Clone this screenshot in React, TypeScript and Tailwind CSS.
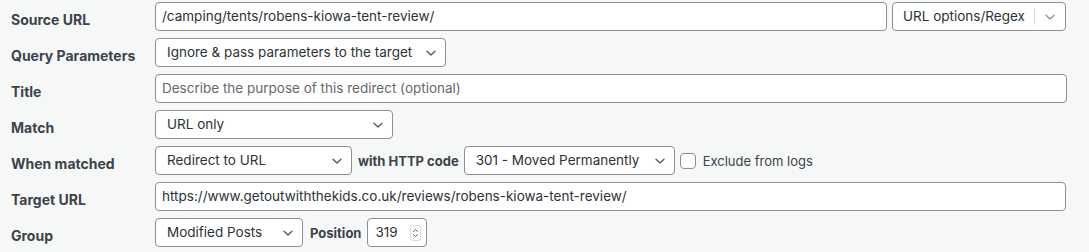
import { ReactNode } from 'react'

const font = { fontFamily: 'Inter, "Liberation Sans", sans-serif' }

const Chevron = ({ className = 'text-[#50575e]' }: { className?: string }) => (
  <svg width="12" height="12" viewBox="0 0 12 12" className={className} fill="none">
    <path d="M2 4.2 6 8l4-3.8" stroke="currentColor" strokeWidth="1.3" strokeLinecap="round" strokeLinejoin="round" />
  </svg>
)

const Row = ({ label, children }: { label: string; children: ReactNode }) => (
  <div className="flex items-center h-[29px]">
    <div className="w-[155px] shrink-0 pl-[11px] pt-[5px] text-[14px] font-bold text-[#3c434a]">{label}</div>
    <div className="flex items-center flex-1 min-w-0">{children}</div>
  </div>
)

const Input = ({ value, placeholder, className = '' }: { value?: string; placeholder?: string; className?: string }) => (
  <div
    className={`h-[29px] flex items-center px-[6px] bg-white border border-[#8c8f94] rounded-[4px] text-[13.5px] ${
      value ? 'text-[#2c3338]' : 'text-[#646970]'
    } ${className}`}
  >
    {value || placeholder}
  </div>
)

const Select = ({ value, width }: { value: string; width: string }) => (
  <div
    className={`h-[29px] flex items-center justify-between pl-[11px] pr-[8px] bg-white border border-[#8c8f94] rounded-[4px] text-[13.5px] text-[#2c3338] ${width}`}
  >
    <span className="whitespace-nowrap">{value}</span>
    <Chevron />
  </div>
)

export default function App() {
  return (
    <div className="w-[1089px] h-[252px] bg-[#f6f7f7] pt-[2px] flex flex-col gap-[7px]" style={font}>
      <Row label="Source URL">
        <Input value="/camping/tents/robens-kiowa-tent-review/" className="w-[732px]" />
        <div className="ml-[5px] w-[174px] h-[29px] flex items-center bg-white border border-[#8c8f94] rounded-[4px] text-[13.5px] text-[#2c3338]">
          <span className="pl-[10px] w-[141px] whitespace-nowrap">URL options/Regex</span>
          <span className="h-[17px] w-px bg-[#dcdcde]" />
          <span className="flex-1 flex justify-center">
            <Chevron className="text-[#8c8f94]" />
          </span>
        </div>
      </Row>
      <Row label="Query Parameters">
        <Select value="Ignore & pass parameters to the target" width="w-[291px]" />
      </Row>
      <Row label="Title">
        <Input placeholder="Describe the purpose of this redirect (optional)" className="w-[912px]" />
      </Row>
      <Row label="Match">
        <Select value="URL only" width="w-[238px]" />
      </Row>
      <Row label="When matched">
        <Select value="Redirect to URL" width="w-[197px]" />
        <span className="ml-[6px] pt-[3px] text-[13px] font-bold text-[#3c434a] whitespace-nowrap">with HTTP code</span>
        <div className="ml-[5px]">
          <Select value="301 - Moved Permanently" width="w-[211px]" />
        </div>
        <span className="ml-[5px] w-[16px] h-[16px] bg-white border border-[#8c8f94] rounded-[4px]" />
        <span className="ml-[7px] pt-[3px] text-[13px] text-[#3c434a] whitespace-nowrap">Exclude from logs</span>
      </Row>
      <Row label="Target URL">
        <Input value="https://www.getoutwiththekids.co.uk/reviews/robens-kiowa-tent-review/" className="w-[911px]" />
      </Row>
      <Row label="Group">
        <Select value="Modified Posts" width="w-[148px]" />
        <span className="ml-[7px] pt-[3px] text-[13px] font-bold text-[#3c434a]">Position</span>
        <div className="ml-[6px] w-[60px] h-[29px] flex items-center justify-between pl-[7px] pr-[5px] bg-white border border-[#8c8f94] rounded-[4px] text-[13.5px] text-[#2c3338]">
          <span>319</span>
          <span className="w-[11px] h-[16px] rounded-[3px] border border-[#dcdcde] flex flex-col items-center justify-center">
            <svg width="7" height="12" viewBox="0 0 7 12" fill="none" className="text-[#50575e]">
              <path d="M1.5 4.5 3.5 2.5l2 2M1.5 7.5l2 2 2-2" stroke="currentColor" strokeWidth="1" strokeLinecap="round" strokeLinejoin="round" />
            </svg>
          </span>
        </div>
      </Row>
    </div>
  )
}
